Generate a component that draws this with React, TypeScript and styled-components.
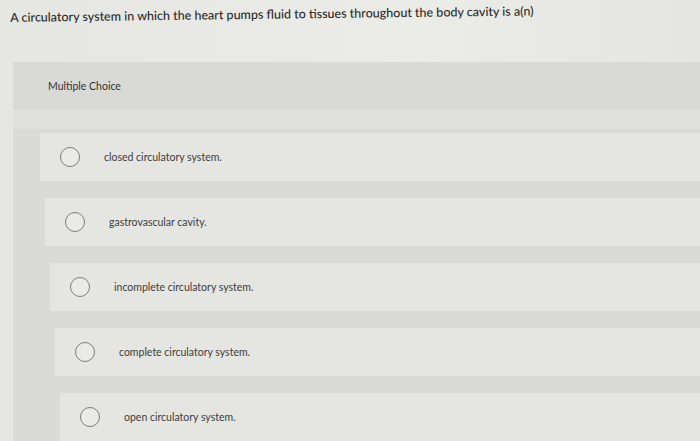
import React from 'react';
import styled, { createGlobalStyle } from 'styled-components';

const GlobalStyle = createGlobalStyle`
  html, body {
    margin: 0;
    padding: 0;
    background: #e8e8e4;
  }
  body {
    font-family: Lato, 'Open Sans', 'Liberation Sans', sans-serif;
  }
`;

const Page = styled.div`
  width: 700px;
  height: 441px;
  overflow: hidden;
  background: linear-gradient(90deg, #e6e6e2 0%, #ebebe7 60%, #e5e5e1 100%);
  display: flex;
  flex-direction: column;
`;

const Question = styled.h1`
  margin: 0;
  padding: 10px 0 0 10px;
  height: 62px;
  flex-shrink: 0;
  box-sizing: border-box;
  font-size: 12.5px;
  font-weight: 500;
  color: #2b2b2b;
  transform: rotate(-0.7deg);
  transform-origin: left top;
`;

const Panel = styled.section`
  margin-left: 13px;
  flex: 1;
  background: #dcdcd8;
  display: flex;
  flex-direction: column;
`;

const PanelHeader = styled.div`
  height: 48px;
  display: flex;
  align-items: center;
  padding-left: 35px;
  font-size: 10.5px;
  color: #333;
  background: #d9d9d5;
`;

const Choices = styled.ul`
  list-style: none;
  margin: 0;
  padding: 23px 0 0 0;
  display: flex;
  flex-direction: column;
  gap: 17px;
  background: linear-gradient(180deg, #e0e0dc 0px, #e0e0dc 18px, #dadad6 19px);
`;

const Choice = styled.li<{ $indent: number }>`
  margin-left: ${(p) => p.$indent}px;
  height: 48px;
  display: flex;
  align-items: center;
  background: #e5e5e1;
  padding-left: 20px;
`;

const Radio = styled.span`
  width: 18px;
  height: 18px;
  border-radius: 50%;
  border: 1.5px solid #7d7d7b;
  background: #eaeae7;
  flex-shrink: 0;
`;

const Label = styled.span`
  margin-left: 24px;
  font-size: 10.5px;
  color: #3d3d3d;
`;

const options = [
  'closed circulatory system.',
  'gastrovascular cavity.',
  'incomplete circulatory system.',
  'complete circulatory system.',
  'open circulatory system.',
];

export default function App() {
  return (
    <>
      <GlobalStyle />
      <Page>
        <Question>
          A circulatory system in which the heart pumps fluid to tissues throughout the body cavity is a(n)
        </Question>
        <Panel>
          <PanelHeader>Multiple Choice</PanelHeader>
          <Choices>
            {options.map((o, i) => (
              <Choice key={o} $indent={27 + i * 5}>
                <Radio />
                <Label>{o}</Label>
              </Choice>
            ))}
          </Choices>
        </Panel>
      </Page>
    </>
  );
}
